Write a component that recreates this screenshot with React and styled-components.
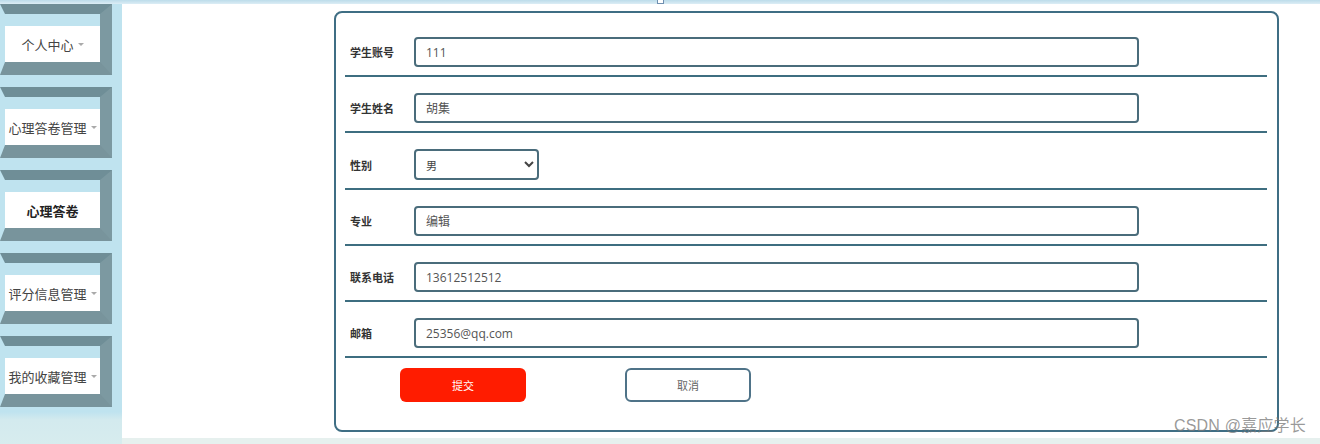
import React from 'react';
import styled, { createGlobalStyle } from 'styled-components';

const GlobalStyle = createGlobalStyle`
	html, body {
		margin: 0;
		padding: 0;
		background: #ffffff;
		font-family: "Noto Sans CJK SC", "Open Sans", sans-serif;
	}
`;

const PageSd = styled.div`
	position: relative;
	width: 1320px;
	height: 444px;
	overflow: hidden;
	display: flex;
	flex-direction: column;
`;
const TopStripSd = styled.div`
	height: 4px;
	background: linear-gradient(#bcdcea, #dcedf5);
	flex: none;
	display: flex;
	justify-content: center;
`;
const HandleSd = styled.div`
	width: 5px;
	height: 3px;
	border: 1px solid #6f8fb0;
	border-top: 0;
	background: #fff;
`;
const BodySd = styled.div`
	flex: 1;
	display: flex;
	min-height: 0;
`;
const SidebarSd = styled.nav`
	width: 122px;
	flex: none;
	display: flex;
	flex-direction: column;
	gap: 12px;
	background: linear-gradient(#bfe3ef 0, #bfe3ef 408px, #d3eaee 416px, #d7ecee 100%);
`;
const ItemSd = styled.div`
	width: 95px;
	border-style: solid;
	border-width: 10px 12px 13px 5px;
	border-color: #6f8e97 #7c99a1 #78949c #bfe3ef;
	padding-top: 12px;
	background: #bfe3ef;
`;
const LabelSd = styled.div`
	height: 36px;
	background: #fff;
	display: flex;
	align-items: center;
	justify-content: center;
	gap: 4px;
	font-size: 13px;
	font-weight: ${props => (props.$active ? 700 : 400)};
	color: ${props => (props.$active ? '#222' : '#444')};
	white-space: nowrap;
`;
const CaretSd = styled.span`
	width: 0;
	height: 0;
	border-left: 3px solid transparent;
	border-right: 3px solid transparent;
	border-top: 3px solid #aaa;
`;
const MainSd = styled.main`
	flex: 1;
	display: flex;
	flex-direction: column;
	background: linear-gradient(#fff 0, #fff 434px, #e6f0ee 434px);
`;
const CardSd = styled.form`
	margin: 7px 0 0 212px;
	width: 922px;
	border: 2px solid #3f6e84;
	border-radius: 8px;
	padding: 8px 10px 28px 9px;
	box-sizing: content-box;
`;
const RowSd = styled.div`
	display: flex;
	align-items: center;
	padding: 16px 0 8px;
	border-bottom: 2px solid #3e6e80;
`;
const FieldLabelSd = styled.label`
	width: 64px;
	padding-left: 5px;
	flex: none;
	font-size: 11px;
	font-weight: 700;
	color: #333;
`;
const InputSd = styled.input`
	width: 725px;
	height: 30px;
	box-sizing: border-box;
	border: 2px solid #4a6c7b;
	border-radius: 4px;
	padding: 0 10px;
	font-family: "Open Sans", "Noto Sans CJK SC", sans-serif;
	font-size: 12px;
	color: #555;
	outline: none;
`;
const SelectSd = styled.select`
	width: 125px;
	height: 31px;
	box-sizing: border-box;
	border: 2px solid #4a6c7b;
	border-radius: 4px;
	padding: 0 6px;
	font-family: "Noto Sans CJK SC", sans-serif;
	font-size: 11px;
	color: #444;
	background: #fff;
	outline: none;
`;
const ActionsSd = styled.div`
	display: flex;
	gap: 99px;
	margin-top: 10px;
	padding-left: 55px;
`;
const ButtonSd = styled.button`
	width: 126px;
	height: 34px;
	border-radius: 6px;
	font-family: "Noto Sans CJK SC", sans-serif;
	font-size: 11px;
	cursor: pointer;
	border: ${props => (props.$primary ? 'none' : '2px solid #4f7388')};
	background: ${props => (props.$primary ? '#ff1c00' : '#fff')};
	color: ${props => (props.$primary ? '#fff' : '#666')};
`;
const WatermarkSd = styled.div`
	position: absolute;
	right: 14px;
	bottom: 8px;
	font-family: "Liberation Sans", "Noto Sans CJK SC", sans-serif;
	font-size: 16px;
	color: rgba(120, 120, 120, 0.75);
	letter-spacing: 0.2px;
`;

const menu = [
	{ label: '个人中心' },
	{ label: '心理答卷管理' },
	{ label: '心理答卷', active: true },
	{ label: '评分信息管理' },
	{ label: '我的收藏管理' },
];

const fields = [
	{ label: '学生账号', value: '111' },
	{ label: '学生姓名', value: '胡集' },
	{ label: '性别', select: true, value: '男' },
	{ label: '专业', value: '编辑' },
	{ label: '联系电话', value: '13612512512' },
	{ label: '邮箱', value: '25356@qq.com' },
];

const App = () => (
	<PageSd>
		<GlobalStyle />
		<TopStripSd>
			<HandleSd />
		</TopStripSd>
		<BodySd>
			<SidebarSd>
				{menu.map(item => (
					<ItemSd key={item.label}>
						<LabelSd $active={item.active}>
							{item.label}
							{!item.active && <CaretSd />}
						</LabelSd>
					</ItemSd>
				))}
			</SidebarSd>
			<MainSd>
				<CardSd onSubmit={e => e.preventDefault()}>
					{fields.map(f => (
						<RowSd key={f.label}>
							<FieldLabelSd>{f.label}</FieldLabelSd>
							{f.select ? (
								<SelectSd defaultValue={f.value}>
									<option value="男">男</option>
									<option value="女">女</option>
								</SelectSd>
							) : (
								<InputSd defaultValue={f.value} />
							)}
						</RowSd>
					))}
					<ActionsSd>
						<ButtonSd type="submit" $primary>提交</ButtonSd>
						<ButtonSd type="button">取消</ButtonSd>
					</ActionsSd>
				</CardSd>
			</MainSd>
		</BodySd>
		<WatermarkSd>CSDN @嘉应学长</WatermarkSd>
	</PageSd>
);

export default App;
